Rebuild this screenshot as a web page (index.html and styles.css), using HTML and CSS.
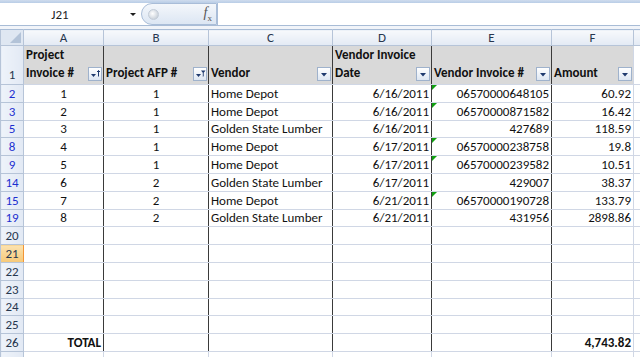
FILE: index.html
```html
<!DOCTYPE html>
<html lang="en">
<head>
    <meta charset="UTF-8">
    <meta name="viewport" content="width=device-width, initial-scale=1.0">
    <title>AFP Invoices</title>
    <link rel="stylesheet" href="styles.css">
</head>
<body>
    <div class="top-strip"></div>
    <div class="formula-bar">
        <div class="name-box">
            <span class="name-text">J21</span>
            <span class="name-caret"></span>
        </div>
        <div class="fx-pill">
            <span class="fx-dot"></span>
            <span class="fx"><i>f</i><sub>x</sub></span>
        </div>
        <div class="formula-input"></div>
    </div>
    <div class="sheet-gap"></div>

    <table class="sheet">
        <colgroup>
            <col class="c-rh">
            <col class="c-a">
            <col class="c-b">
            <col class="c-c">
            <col class="c-d">
            <col class="c-e">
            <col class="c-f">
            <col class="c-g">
        </colgroup>
        <tr class="col-heads">
            <th class="corner"><span class="corner-tri"></span></th>
            <th>A</th><th>B</th><th>C</th><th>D</th><th>E</th><th>F</th><th></th>
        </tr>
        <tr class="head-row">
            <th class="rh rh-bottom">1</th>
            <td class="hdr dark">
                <div class="hdr-wrap"><span>Project<br>Invoice #</span>
                    <span class="fbtn"><svg width="14" height="14" viewBox="0 0 14 14"><path d="M3 7h5l-2.5 3z" fill="#1f3a6e"/><path d="M10.5 3.5v6M9 5l1.5-1.5L12 5" stroke="#1f3a6e" stroke-width="1" fill="none"/></svg></span>
                </div>
            </td>
            <td class="hdr dark">
                <div class="hdr-wrap"><span>Project AFP #</span>
                    <span class="fbtn"><svg width="14" height="14" viewBox="0 0 14 14"><path d="M3 7h5l-2.5 3z" fill="#1f3a6e"/><path d="M8 3.5h4.5l-1.8 2.2v3.5l-0.9 0.6v-4.1z" fill="#1f3a6e"/></svg></span>
                </div>
            </td>
            <td class="hdr dark">
                <div class="hdr-wrap"><span>Vendor</span>
                    <span class="fbtn"><svg width="14" height="14" viewBox="0 0 14 14"><path d="M4 6h6l-3 3.5z" fill="#1f3a6e"/></svg></span>
                </div>
            </td>
            <td class="hdr dark">
                <div class="hdr-wrap"><span>Vendor Invoice<br>Date</span>
                    <span class="fbtn"><svg width="14" height="14" viewBox="0 0 14 14"><path d="M4 6h6l-3 3.5z" fill="#1f3a6e"/></svg></span>
                </div>
            </td>
            <td class="hdr dark">
                <div class="hdr-wrap"><span>Vendor Invoice #</span>
                    <span class="fbtn"><svg width="14" height="14" viewBox="0 0 14 14"><path d="M4 6h6l-3 3.5z" fill="#1f3a6e"/></svg></span>
                </div>
            </td>
            <td class="hdr">
                <div class="hdr-wrap"><span>Amount</span>
                    <span class="fbtn"><svg width="14" height="14" viewBox="0 0 14 14"><path d="M4 6h6l-3 3.5z" fill="#1f3a6e"/></svg></span>
                </div>
            </td>
            <td class="blank"></td>
        </tr>
        <tr>
            <th class="rh blue">2</th>
            <td class="mid dark">1</td><td class="mid dark">1</td><td class="dark">Home Depot</td><td class="num dark">6/16/2011</td><td class="num dark warn">06570000648105</td><td class="num">60.92</td><td class="blank"></td>
        </tr>
        <tr>
            <th class="rh blue">3</th>
            <td class="mid dark">2</td><td class="mid dark">1</td><td class="dark">Home Depot</td><td class="num dark">6/16/2011</td><td class="num dark warn">06570000871582</td><td class="num">16.42</td><td class="blank"></td>
        </tr>
        <tr>
            <th class="rh blue">5</th>
            <td class="mid dark">3</td><td class="mid dark">1</td><td class="dark">Golden State Lumber</td><td class="num dark">6/16/2011</td><td class="num dark">427689</td><td class="num">118.59</td><td class="blank"></td>
        </tr>
        <tr>
            <th class="rh blue">8</th>
            <td class="mid dark">4</td><td class="mid dark">1</td><td class="dark">Home Depot</td><td class="num dark">6/17/2011</td><td class="num dark warn">06570000238758</td><td class="num">19.8</td><td class="blank"></td>
        </tr>
        <tr>
            <th class="rh blue">9</th>
            <td class="mid dark">5</td><td class="mid dark">1</td><td class="dark">Home Depot</td><td class="num dark">6/17/2011</td><td class="num dark warn">06570000239582</td><td class="num">10.51</td><td class="blank"></td>
        </tr>
        <tr>
            <th class="rh blue">14</th>
            <td class="mid dark">6</td><td class="mid dark">2</td><td class="dark">Golden State Lumber</td><td class="num dark">6/17/2011</td><td class="num dark">429007</td><td class="num">38.37</td><td class="blank"></td>
        </tr>
        <tr>
            <th class="rh blue">15</th>
            <td class="mid dark">7</td><td class="mid dark">2</td><td class="dark">Home Depot</td><td class="num dark">6/21/2011</td><td class="num dark warn">06570000190728</td><td class="num">133.79</td><td class="blank"></td>
        </tr>
        <tr>
            <th class="rh blue">19</th>
            <td class="mid dark">8</td><td class="mid dark">2</td><td class="dark">Golden State Lumber</td><td class="num dark">6/21/2011</td><td class="num dark">431956</td><td class="num">2898.86</td><td class="blank"></td>
        </tr>
        <tr>
            <th class="rh">20</th>
            <td class="dark"></td><td class="dark"></td><td class="dark"></td><td class="dark"></td><td class="dark"></td><td></td><td class="blank"></td>
        </tr>
        <tr>
            <th class="rh active">21</th>
            <td class="dark"></td><td class="dark"></td><td class="dark"></td><td class="dark"></td><td class="dark"></td><td></td><td class="blank"></td>
        </tr>
        <tr>
            <th class="rh">22</th>
            <td class="dark"></td><td class="dark"></td><td class="dark"></td><td class="dark"></td><td class="dark"></td><td></td><td class="blank"></td>
        </tr>
        <tr>
            <th class="rh">23</th>
            <td class="dark"></td><td class="dark"></td><td class="dark"></td><td class="dark"></td><td class="dark"></td><td></td><td class="blank"></td>
        </tr>
        <tr>
            <th class="rh">24</th>
            <td class="dark"></td><td class="dark"></td><td class="dark"></td><td class="dark"></td><td class="dark"></td><td></td><td class="blank"></td>
        </tr>
        <tr>
            <th class="rh">25</th>
            <td class="dark"></td><td class="dark"></td><td class="dark"></td><td class="dark"></td><td class="dark"></td><td></td><td class="blank"></td>
        </tr>
        <tr class="total-row">
            <th class="rh">26</th>
            <td class="num dark strong">TOTAL</td><td class="dark"></td><td class="dark"></td><td class="dark"></td><td class="dark"></td><td class="num strong">4,743.82</td><td class="blank"></td>
        </tr>
        <tr>
            <th class="rh">27</th>
            <td></td><td></td><td></td><td></td><td></td><td></td><td class="blank"></td>
        </tr>
    </table>
</body>
</html>
```

FILE: styles.css
```css
body {
    margin: 0;
    width: 640px;
    height: 357px;
    overflow: hidden;
    background: #ffffff;
    font-family: Carlito, Lato, "Liberation Sans", sans-serif;
}

.top-strip {
    height: 3px;
    background: linear-gradient(#cfdcee, #b9cde6);
}

.formula-bar {
    display: flex;
    height: 22px;
    background: #ffffff;
    border-bottom: 1px solid #a8bcd6;
}

.name-box {
    width: 141px;
    display: flex;
    align-items: center;
    font-size: 13px;
    color: #1e1e1e;
}

.name-text {
    width: 120px;
    text-align: center;
}

.name-caret {
    width: 0;
    height: 0;
    margin-left: 10px;
    border-left: 3px solid transparent;
    border-right: 3px solid transparent;
    border-top: 3px solid #1e1e1e;
}

.fx-pill {
    width: 76px;
    display: flex;
    align-items: center;
    justify-content: space-between;
    padding: 0 4px 0 6px;
    box-sizing: border-box;
    border: 1px solid #a9bdd8;
    border-radius: 11px 0 0 11px;
    background: linear-gradient(#f4f7fb, #dce6f3);
}

.fx-dot {
    width: 9px;
    height: 9px;
    border-radius: 50%;
    background: radial-gradient(circle at 40% 40%, #ffffff, #b8c2ce);
    border: 1px solid #c3ccd8;
}

.fx {
    font-family: "Liberation Serif", serif;
    font-size: 14px;
    color: #555555;
}

.fx sub {
    font-size: 9px;
}

.formula-input {
    flex: 1;
    border-left: 1px solid #a9bdd8;
}

.sheet-gap {
    height: 3px;
    background: #f1f4f9;
}

.sheet {
    border-collapse: collapse;
    table-layout: fixed;
    width: 655px;
    font-size: 13px;
    color: #111111;
}

.c-rh { width: 23px; }
.c-a { width: 80px; }
.c-b { width: 105px; }
.c-c { width: 124px; }
.c-d { width: 99px; }
.c-e { width: 120px; }
.c-f { width: 82px; }
.c-g { width: 22px; }

.sheet td {
    height: 16.8px;
    padding: 0 2px;
    border: 1px solid #d0d7e5;
    white-space: nowrap;
    overflow: hidden;
    position: relative;
}

.col-heads th {
    height: 14px;
    padding: 0;
    font-weight: normal;
    font-size: 13px;
    color: #27374f;
    background: linear-gradient(#f7f9fc, #e3eaf4);
    border: 1px solid #b6c4d8;
    border-top-color: #a8bcd6;
}

.col-heads .corner {
    background: #dfe7f2;
    position: relative;
}

.corner-tri {
    position: absolute;
    right: 2px;
    bottom: 2px;
    width: 0;
    height: 0;
    border-left: 11px solid transparent;
    border-bottom: 11px solid #b3c3d8;
}

.rh {
    padding: 0;
    font-weight: normal;
    font-size: 13px;
    color: #27374f;
    background: linear-gradient(90deg, #eef3fa, #e2e9f4);
    border: 1px solid #b6c4d8;
    text-align: center;
}

.sheet .rh-bottom {
    vertical-align: bottom;
    padding: 20px 0 2px;
}

.rh.blue {
    color: #1c2fd0;
}

.rh.active {
    background: linear-gradient(#fbe2b0, #f6c978);
    border-right: 1px solid #f29536;
    color: #27374f;
}

.head-row td {
    height: 36px;
    background: #d9d9d9;
    font-weight: bold;
    vertical-align: bottom;
    padding: 0 1px 2px 2px;
    line-height: 18px;
}

.head-row td.blank {
    background: #ffffff;
}

.hdr-wrap {
    display: flex;
    align-items: flex-end;
    justify-content: space-between;
}

.fbtn {
    width: 14px;
    height: 14px;
    margin-bottom: 1px;
    box-sizing: border-box;
    border: 1px solid #9fb2cc;
    background: linear-gradient(#ffffff, #dde6f2);
    display: flex;
}

.fbtn svg {
    margin: -1px;
}

.sheet td.dark {
    border-right: 1px solid #3a3a3a;
}

.mid {
    text-align: center;
}

.num {
    text-align: right;
}

.strong {
    font-weight: bold;
}

.warn::before {
    content: "";
    position: absolute;
    left: 0;
    top: 0;
    border-top: 5px solid #11a011;
    border-right: 5px solid transparent;
}

.total-row td {
    border-top: 1px solid #2a2a2a;
}

.blank {
    background: #ffffff;
}
```
